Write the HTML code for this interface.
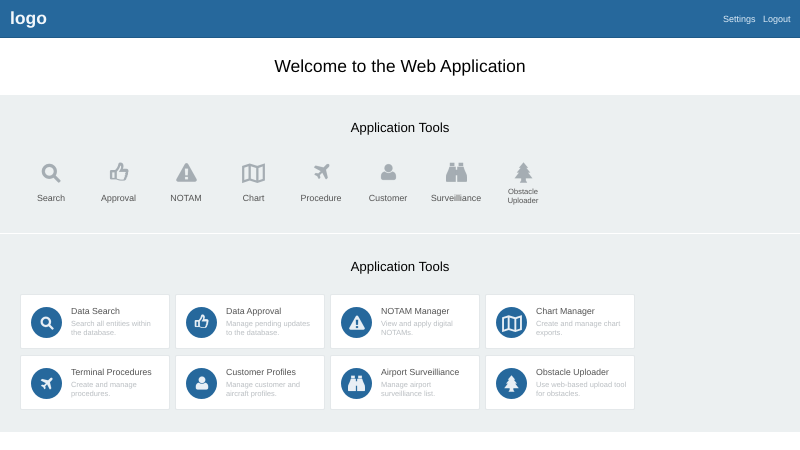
<!DOCTYPE html>
<html lang="en">
<head>
<meta charset="utf-8">
<title>Welcome to the Web Application</title>
<style>
html,body{margin:0;padding:0;width:800px;height:450px;overflow:hidden;background:#fff;font-family:"Liberation Sans",sans-serif;text-rendering:geometricPrecision}
.abs,.card,.ti,.ic{position:absolute}
#hdr{left:0;top:0;width:800px;height:37px;background:#26689c;border-bottom:1px solid #1f5a88}
#logo{left:10px;top:8px;font-size:17.5px;font-weight:bold;color:#f2f7fb;line-height:21px}
.nav{font-size:9px;line-height:12px;color:#d5e6f3}
#grey1{left:0;top:95px;width:800px;height:138px;background:#ecf0f1}
#grey2{left:0;top:234px;width:800px;height:198px;background:#ecf0f1}
h1,h2{position:absolute;margin:0;left:0;width:800px;text-align:center;font-weight:normal;color:#000}
h1{font-size:17.5px;line-height:24px}
h2{font-size:13.2px;line-height:18px}
.ti{width:68px;text-align:center;font-size:8.9px;line-height:12px;color:#555}
.ti.small{font-size:7.6px;line-height:9px;top:187px}
.ic{fill:#a5adb3;stroke:#a5adb3;stroke-width:.3}
.ic.t{stroke-width:.8}
.card{width:148px;height:53px;background:#fff;border:1px solid #e4e8ea;border-radius:2px}
.card .c{position:absolute;left:10px;top:12px;width:31px;height:31px;border-radius:50%;background:#26689c}
.card svg{position:absolute;left:7.500px;top:7.500px;width:16px;height:16px;fill:#e8eff5;stroke:#e8eff5;stroke-width:.3}
.card svg.t{stroke-width:.7}
.card svg.m{left:5.500px;top:5.500px;width:20px;height:20px}
.card svg.s{left:9px;top:9px;width:13px;height:13px}
.card svg.l{left:7px;top:6.500px;width:17px;height:17px}
.card b{position:absolute;left:50px;top:10px;font-weight:normal;font-size:8.800px;line-height:12px;color:#555;white-space:nowrap}
.card p{position:absolute;left:50px;top:24px;margin:0;font-size:7.450px;line-height:9px;color:#bcc0c4;white-space:nowrap}
</style>
</head>
<body>
<svg width="0" height="0" style="position:absolute">
<symbol id="search" viewBox="0 0 24 24"><path fill-rule="evenodd" d="M10 1a9 9 0 1 1 0 18a9 9 0 0 1 0-18zM10 4.600a5.400 5.400 0 1 0 0 10.800a5.400 5.400 0 0 0 0-10.800z"/><path d="M16 13.500l7 7c.8.8.2 1.600-.4 2.200s-1.400 1.100-2.100.4l-7-7z"/></symbol>
<symbol id="thumb" viewBox="0 0 24 24"><path fill-rule="evenodd" d="M13.500 1c2.500 0 3.500 2 3.500 4c0 1.500-.5 2.500-1 3.500h4.500c1.800 0 2.500 1.300 2.500 2.500c0 .8-.3 1.400-.7 1.900c.4 1.200.1 2.200-.6 3c.2 1.200-.2 2.200-1.100 2.900c0 2-1.300 3.200-3.500 3.200h-3c-2.500 0-4-1-5.500-1.500H2.500a1 1 0 0 1-1-1V11a1 1 0 0 1 1-1h5c2-2 3.500-4 4-7c.2-1.200.8-2 2-2zM13.500 3c-.3 3.500-2.300 6-4.500 8.500v8.700c2 .5 3 1.300 5 1.300h2.500c1.500 0 2-.8 1.800-2.300c1-.5 1.300-1.600.9-2.600c.9-.6 1.100-1.700.5-2.700c1.300-.8 1-2.400-.7-2.400h-6.500c.8-1.500 2.500-3 2.500-5.500c0-1.300-.7-2.300-2-2.500zM3.500 12v7.500H7V12z"/></symbol>
<symbol id="warn" viewBox="0 0 24 24"><path fill-rule="evenodd" d="M12 2.500c.8 0 1.400.4 1.800 1.100l9.500 17c.8 1.400-.1 2.900-1.800 2.900H2.500c-1.700 0-2.600-1.500-1.800-2.900l9.500-17c.4-.7 1-1.100 1.800-1.100zM10 8.500l.4 8h3.200l.4-8zM10.200 18v3.200h3.600V18z"/></symbol>
<symbol id="map" viewBox="0 0 24 24"><path fill-rule="evenodd" d="M.5 5.500L8 3l8 2.500L23.500 3v17L16 22.500 8 20 .5 22.500zM2 6.600v13.800l5.200-1.700V5zM8.800 5v13.700l6.400 2V7zM16.800 7v13.700l5.200-1.700V5.100z"/></symbol>
<symbol id="plane" viewBox="0 0 24 24"><path d="M22.300 1.700c1.300 1.300.6 3.200-.5 4.300l-3.600 3.600 2.500 10.700c.1.400 0 .7-.3 1l-1.300 1.300c-.4.400-1 .3-1.300-.2l-4.700-8.900-3.500 3.500.6 3.400c0 .3 0 .5-.2.700l-1 1c-.4.400-1 .3-1.200-.2l-1.800-3.400-3.400-1.800c-.5-.3-.6-.9-.2-1.200l1-1c.2-.2.400-.3.700-.2l3.400.6 3.500-3.500-8.900-4.700c-.5-.3-.6-.9-.2-1.300l1.300-1.300c.3-.3.600-.4 1-.3l10.700 2.500 3.600-3.600c1.100-1.100 3-1.800 4.300-.5z"/></symbol>
<symbol id="user" viewBox="0 0 24 24"><circle cx="12" cy="6.500" r="5.700"/><path d="M6.800 11.500c1.400 1.300 3.200 2 5.200 2s3.800-.7 5.200-2c3.300.4 5.300 2.800 5.300 6.500v2.200c0 1.800-1.200 3-3 3h-15c-1.800 0-3-1.200-3-3V18c0-3.700 2-6.100 5.300-6.500z"/></symbol>
<symbol id="bino" viewBox="0 0 24 24"><path d="M4.500 1h5v3.500h-5zM14.500 1h5v3.500h-5zM4 5.500h7v17H1a1 1 0 0 1-1-1v-4c0-4 2.500-6 4-12zM13 5.500h7c1.500 6 4 8 4 12v4a1 1 0 0 1-1 1H13zM11 9h2v6h-2z"/></symbol>
<symbol id="tree" viewBox="0 0 24 24"><path d="M12 .5l5 6h-2l4.500 5.500H17l5 6.500H14.500V21l1.500 2.500H8L9.500 21v-2.500H2L7 12H4.500L9 6.500H7z"/></symbol>
</svg>

<div id="hdr" class="abs"></div>
<div id="logo" class="abs">logo</div>
<div class="abs nav" style="left:723px;top:13px">Settings</div>
<div class="abs nav" style="left:763px;top:13px">Logout</div>

<h1 style="top:54px">Welcome to the Web Application</h1>

<div id="grey1" class="abs"></div>
<div id="grey2" class="abs"></div>
<h2 style="top:118.500px">Application Tools</h2>
<h2 style="top:257.500px">Application Tools</h2>

<svg class="ic" style="left:41px;top:163px" width="20" height="20"><use href="#search"/></svg>
<svg class="ic t" style="left:108.500px;top:162px" width="20" height="20"><use href="#thumb"/></svg>
<svg class="ic" style="left:175.500px;top:161px" width="21" height="21"><use href="#warn"/></svg>
<svg class="ic t" style="left:242px;top:161px" width="23" height="23"><use href="#map"/></svg>
<svg class="ic" style="left:312.500px;top:163px" width="17" height="17"><use href="#plane"/></svg>
<svg class="ic" style="left:380px;top:163px" width="17" height="18"><use href="#user"/></svg>
<svg class="ic" style="left:445.500px;top:162px" width="21" height="21"><use href="#bino"/></svg>
<svg class="ic" style="left:512.500px;top:161.500px" width="21" height="21"><use href="#tree"/></svg>

<div class="ti" style="left:17px;top:192px">Search</div>
<div class="ti" style="left:84.500px;top:192px">Approval</div>
<div class="ti" style="left:152px;top:192px">NOTAM</div>
<div class="ti" style="left:219.500px;top:192px">Chart</div>
<div class="ti" style="left:287px;top:192px">Procedure</div>
<div class="ti" style="left:354px;top:192px">Customer</div>
<div class="ti" style="left:422px;top:192px">Surveilliance</div>
<div class="ti small" style="left:489px">Obstacle<br>Uploader</div>

<div class="card" style="left:20px;top:294px"><div class="c"><svg class="s" style="left:8.500px;top:8.500px;width:14px;height:14px"><use href="#search"/></svg></div><b>Data Search</b><p>Search all entities within<br>the database.</p></div>
<div class="card" style="left:175px;top:294px"><div class="c"><svg class="t" style="width:15px;height:15px;left:8px;top:7px"><use href="#thumb"/></svg></div><b>Data Approval</b><p>Manage pending updates<br>to the database.</p></div>
<div class="card" style="left:330px;top:294px"><div class="c"><svg style="top:6.500px"><use href="#warn"/></svg></div><b>NOTAM Manager</b><p>View and apply digital<br>NOTAMs.</p></div>
<div class="card" style="left:485px;top:294px"><div class="c"><svg class="m t"><use href="#map"/></svg></div><b>Chart Manager</b><p>Create and manage chart<br>exports.</p></div>

<div class="card" style="left:20px;top:355px"><div class="c"><svg class="s"><use href="#plane"/></svg></div><b>Terminal Procedures</b><p>Create and manage<br>procedures.</p></div>
<div class="card" style="left:175px;top:355px"><div class="c"><svg class="s" style="width:14px;height:14px;left:8.500px;top:8px"><use href="#user"/></svg></div><b>Customer Profiles</b><p>Manage customer and<br>aircraft profiles.</p></div>
<div class="card" style="left:330px;top:355px"><div class="c"><svg class="l"><use href="#bino"/></svg></div><b>Airport Surveilliance</b><p>Manage airport<br>surveilliance list.</p></div>
<div class="card" style="left:485px;top:355px"><div class="c"><svg class="l"><use href="#tree"/></svg></div><b>Obstacle Uploader</b><p>Use web-based upload tool<br>for obstacles.</p></div>
</body>
</html>
